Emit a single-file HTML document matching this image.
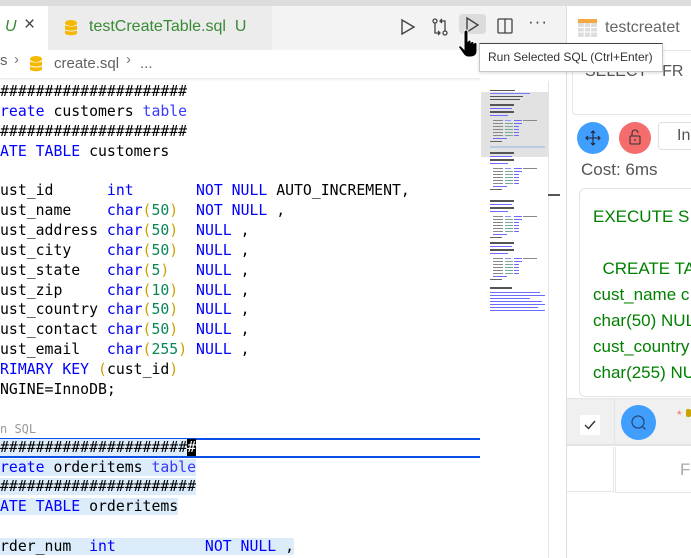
<!DOCTYPE html>
<html><head><meta charset="utf-8"><style>
*{margin:0;padding:0;box-sizing:border-box}
body{width:691px;height:558px;overflow:hidden;background:#fff;position:relative;font-family:"Liberation Sans",sans-serif}
.a{position:absolute}
.code{position:absolute;left:0;font-family:"DejaVu Sans Mono","Liberation Mono",monospace;font-size:14.8px;line-height:19.85px;height:19.85px;white-space:pre;color:#000}
.k{color:#0000ff}.t{color:#3a3aff}.n{color:#098658}.p{color:#c9a300}
.sel{background:#dcecfb}
.g{color:#008000}
</style></head><body>
<div class="a" style="left:0;top:0;width:691px;height:6px;background:#dddddd"></div>
<div class="a" style="left:0;top:6px;width:566px;height:44px;background:#f3f3f3"></div>
<div class="a" style="left:0;top:6px;width:48px;height:44px;background:#fff"></div>
<div class="a" style="left:5px;top:18px;font-size:16px;color:#388a34;font-style:italic">U</div>
<div class="a" style="left:24px;top:14px;font-size:19px;color:#444">×</div>
<div class="a" style="left:48px;top:6px;width:224px;height:44px;background:#ececec"></div>
<svg class="a" style="left:64px;top:19px" width="14" height="18" viewBox="0 0 14 18"><ellipse cx="7" cy="4" rx="6" ry="3" fill="#f5b800"/><path d="M1 6c0 2 12 2 12 0v4c0 2-12 2-12 0z" fill="#f5b800"/><path d="M1 11c0 2 12 2 12 0v3c0 3-12 3-12 0z" fill="#f5b800"/></svg>
<div class="a" style="left:89px;top:18px;font-size:16px;color:#388a34">testCreateTable.sql&nbsp; U</div>
<svg class="a" style="left:398px;top:17px" width="20" height="20" viewBox="0 0 20 20"><path d="M4 3l12 7-12 7z" fill="none" stroke="#424242" stroke-width="1.4"/></svg>
<svg class="a" style="left:430px;top:17px" width="20" height="20" viewBox="0 0 20 20" fill="none" stroke="#424242" stroke-width="1.3"><circle cx="5" cy="4" r="2"/><circle cx="15" cy="16" r="2"/><path d="M5 6v10h5M15 14V4h-5M8 14l2 2-2 2M12 2l-2 2 2 2"/></svg>
<div class="a" style="left:459px;top:14px;width:27px;height:20px;background:#dcdcdc;border-radius:4px"></div>
<svg class="a" style="left:462px;top:15px" width="20" height="20" viewBox="0 0 20 20"><path d="M5 3l11 7-11 7z" fill="none" stroke="#424242" stroke-width="1.4"/></svg>
<svg class="a" style="left:496px;top:17px" width="18" height="18" viewBox="0 0 18 18" fill="none" stroke="#424242" stroke-width="1.3"><rect x="2" y="2" width="14" height="14" rx="1"/><path d="M9 2v14"/></svg>
<div class="a" style="left:528px;top:12px;font-size:17px;color:#424242;letter-spacing:1px">···</div>
<svg class="a" style="left:457px;top:28px" width="26" height="30" viewBox="0 0 26 30"><path d="M9 2c1.5 0 2 1 2 2v9l1-1c1 0 2 0 2 1v1c1-1 3-1 3 1 1-1 3-1 3 1v7c0 4-3 6-6 6h-3c-2 0-3-1-4-2l-5-7c-1-1 0-3 2-2l3 3V4c0-1 1-2 2-2z" fill="#000" stroke="#fff" stroke-width="1"/></svg>
<div class="a" style="left:0;top:52px;font-size:15px;color:#616161">s</div>
<div class="a" style="left:14px;top:51px;font-size:15px;color:#777">›</div>
<svg class="a" style="left:29px;top:55px" width="14" height="18" viewBox="0 0 14 18"><ellipse cx="7" cy="4" rx="6" ry="3" fill="#f5b800"/><path d="M1 6c0 2 12 2 12 0v4c0 2-12 2-12 0z" fill="#f5b800"/><path d="M1 11c0 2 12 2 12 0v3c0 3-12 3-12 0z" fill="#f5b800"/></svg>
<div class="a" style="left:54px;top:55px;font-size:15px;color:#616161">create.sql</div>
<div class="a" style="left:126px;top:51px;font-size:15px;color:#777">›</div>
<div class="a" style="left:140px;top:55px;font-size:15px;color:#616161">...</div>
<div class="a" style="left:0;top:78px;width:480px;height:3px;background:linear-gradient(#e8e8e8,#fff)"></div>
<div class="code" style="top:82px">#####################</div>
<div class="code" style="top:101.85px"><span class="k">reate</span> customers <span class="t">table</span></div>
<div class="code" style="top:121.7px">#####################</div>
<div class="code" style="top:141.55px"><span class="k">ATE TABLE</span> customers</div>
<div class="code" style="top:181.25px">ust_id      <span class="k">int</span>       <span class="k">NOT NULL</span> AUTO_INCREMENT,</div>
<div class="code" style="top:201.1px">ust_name    <span class="k">char</span><span class="p">(</span><span class="n">50</span><span class="p">)</span>  <span class="k">NOT NULL</span> ,</div>
<div class="code" style="top:220.95px">ust_address <span class="k">char</span><span class="p">(</span><span class="n">50</span><span class="p">)</span>  <span class="k">NULL</span> ,</div>
<div class="code" style="top:240.8px">ust_city    <span class="k">char</span><span class="p">(</span><span class="n">50</span><span class="p">)</span>  <span class="k">NULL</span> ,</div>
<div class="code" style="top:260.65px">ust_state   <span class="k">char</span><span class="p">(</span><span class="n">5</span><span class="p">)</span>   <span class="k">NULL</span> ,</div>
<div class="code" style="top:280.5px">ust_zip     <span class="k">char</span><span class="p">(</span><span class="n">10</span><span class="p">)</span>  <span class="k">NULL</span> ,</div>
<div class="code" style="top:300.35px">ust_country <span class="k">char</span><span class="p">(</span><span class="n">50</span><span class="p">)</span>  <span class="k">NULL</span> ,</div>
<div class="code" style="top:320.2px">ust_contact <span class="k">char</span><span class="p">(</span><span class="n">50</span><span class="p">)</span>  <span class="k">NULL</span> ,</div>
<div class="code" style="top:340.05px">ust_email   <span class="k">char</span><span class="p">(</span><span class="n">255</span><span class="p">)</span> <span class="k">NULL</span> ,</div>
<div class="code" style="top:359.9px"><span class="k">RIMARY KEY</span> <span class="p">(</span>cust_id<span class="p">)</span></div>
<div class="code" style="top:379.75px">NGINE=InnoDB;</div>
<div class="a" style="left:0;top:422px;font-family:'DejaVu Sans Mono',monospace;font-size:12px;color:#999">n SQL</div>
<div class="a" style="left:0;top:438px;width:480px;height:2px;background:#0a4fe6"></div>
<div class="a" style="left:0;top:456px;width:480px;height:2px;background:#0a4fe6"></div>
<div class="code" style="top:438px"><span class="sel">#####################</span><span style="background:#000;color:#fff">#</span></div>
<div class="code" style="top:457.5px"><span class="sel"><span class="k">reate</span> orderitems <span class="t">table</span></span></div>
<div class="code" style="top:477.35px"><span class="sel">######################</span></div>
<div class="code" style="top:497.2px"><span class="sel"><span class="k">ATE TABLE</span> orderitems</span></div>
<div class="code" style="top:536.9px"><span class="sel">rder_num  <span class="k">int</span>          <span class="k">NOT NULL</span> ,</span></div>
<!-- minimap -->
<div class="a" style="left:481px;top:92px;width:67px;height:65px;background:#e2e2e2"></div>
<svg class="a" style="left:481px;top:82px" width="67" height="240" viewBox="0 0 67 240">
<defs>
<g id="blk">
<rect x="9" y="0" width="24" height="2" fill="#555"/>
<rect x="9" y="4" width="22" height="1" fill="#6b6bff"/>
<rect x="9" y="7" width="24" height="2" fill="#555"/>
<rect x="9" y="11" width="18" height="1" fill="#6b6bff"/>
<rect x="12" y="16" width="10" height="1" fill="#888"/><rect x="24" y="16" width="6" height="1" fill="#9090ff"/><rect x="33" y="16" width="8" height="1" fill="#6b6bff"/><rect x="42" y="16" width="14" height="1" fill="#888"/>
<rect x="12" y="19" width="10" height="1" fill="#888"/><rect x="24" y="19" width="8" height="1" fill="#7a9"/><rect x="33" y="19" width="8" height="1" fill="#6b6bff"/>
<rect x="12" y="22" width="10" height="1" fill="#888"/><rect x="24" y="22" width="8" height="1" fill="#7a9"/><rect x="33" y="22" width="5" height="1" fill="#6b6bff"/>
<rect x="12" y="25" width="10" height="1" fill="#888"/><rect x="24" y="25" width="8" height="1" fill="#7a9"/><rect x="33" y="25" width="5" height="1" fill="#6b6bff"/>
<rect x="12" y="28" width="10" height="1" fill="#888"/><rect x="24" y="28" width="8" height="1" fill="#7a9"/><rect x="33" y="28" width="5" height="1" fill="#6b6bff"/>
<rect x="12" y="31" width="10" height="1" fill="#888"/><rect x="24" y="31" width="8" height="1" fill="#7a9"/><rect x="33" y="31" width="5" height="1" fill="#6b6bff"/>
<rect x="12" y="34" width="14" height="1" fill="#6b6bff"/>
<rect x="9" y="37" width="12" height="1" fill="#666"/>
</g></defs>
<rect x="9" y="8" width="25" height="1" fill="#555"/><rect x="9" y="11" width="40" height="1" fill="#7a7aff"/><rect x="9" y="14" width="33" height="1" fill="#555"/><rect x="9" y="17" width="30" height="1" fill="#555"/>
<use href="#blk" y="22"/>
<rect x="9" y="64" width="55" height="2" fill="#b8cce4"/>
<use href="#blk" y="70"/>
<use href="#blk" y="118"/>
<use href="#blk" y="160"/>
<rect x="9" y="205" width="22" height="2" fill="#555"/>
<g fill="#6b6bff"><rect x="9" y="210" width="50" height="1"/><rect x="9" y="213" width="55" height="1"/><rect x="9" y="216" width="40" height="1"/><rect x="9" y="219" width="52" height="1"/><rect x="9" y="222" width="55" height="1"/><rect x="9" y="225" width="48" height="1"/><rect x="9" y="228" width="55" height="1"/></g>
</svg>
<div class="a" style="left:548px;top:81px;width:1px;height:477px;background:#e5e5e5"></div>
<div class="a" style="left:548px;top:194px;width:12px;height:2px;background:#555"></div>
<div class="a" style="left:566px;top:6px;width:1px;height:552px;background:#ddd"></div>
<div class="a" style="left:567px;top:6px;width:124px;height:552px;background:#fff"></div>
<svg class="a" style="left:578px;top:19px" width="19" height="18" viewBox="0 0 19 18"><rect x="0" y="0" width="19" height="4" fill="#f5a742"/><rect x="0" y="4" width="19" height="14" fill="#ddd"/><path d="M0 8.5h19M0 13h19M6.3 4v14M12.6 4v14" stroke="#fff" stroke-width="1"/></svg>
<div class="a" style="left:605px;top:19px;font-size:16px;color:#666">testcreatet</div>
<div class="a" style="left:572px;top:50px;width:130px;height:65px;border:1px solid #e6e6e6;border-radius:4px"></div>
<div class="a" style="left:585px;top:63px;font-size:16px;color:#555">SELECT * FR</div>
<div class="a" style="left:577px;top:122px;width:32px;height:32px;border-radius:50%;background:#409eff"></div>
<svg class="a" style="left:585px;top:130px" width="16" height="16" viewBox="0 0 16 16" fill="none" stroke="#223" stroke-width="1.1"><path d="M8 1v14M1 8h14M6 3l2-2 2 2M6 13l2 2 2-2M3 6l-2 2 2 2M13 6l2 2-2 2"/></svg>
<div class="a" style="left:619px;top:122px;width:32px;height:32px;border-radius:50%;background:#f56c6c"></div>
<svg class="a" style="left:627px;top:129px" width="16" height="17" viewBox="0 0 16 17" fill="none" stroke="#333" stroke-width="1.1"><rect x="3" y="7" width="10" height="8" rx="1"/><path d="M5 7V4a3 3 0 0 1 6 0"/><path d="M8 10v2"/></svg>
<div class="a" style="left:658px;top:122px;width:40px;height:28px;border:1px solid #dcdfe6;border-radius:4px"></div>
<div class="a" style="left:677px;top:127px;font-size:16px;color:#555">Inp</div>
<div class="a" style="left:581px;top:160px;font-size:17px;color:#555">Cost: 6ms</div>
<div class="a" style="left:579px;top:188px;width:130px;height:209px;border:1px solid #e2e2e2;border-radius:6px"></div>
<div class="a g" style="left:593px;top:204px;font-size:17px;line-height:26px;white-space:pre">EXECUTE S

  CREATE TA
cust_name c
char(50) NUL
cust_country
char(255) NU</div>
<div class="a" style="left:567px;top:398px;width:124px;height:48px;background:#f0f0f0;border-top:1px solid #e4e4e4;border-bottom:2px solid #e4e4e4"></div>
<div class="a" style="left:614px;top:398px;width:1px;height:48px;background:#e4e4e4"></div>
<div class="a" style="left:580px;top:415px;width:20px;height:20px;background:#fff;border-radius:2px"></div>
<svg class="a" style="left:583px;top:419px" width="14" height="12" viewBox="0 0 14 12"><path d="M2 6l3.5 3.5L12 2" fill="none" stroke="#333" stroke-width="1.4"/></svg>
<div class="a" style="left:621px;top:405px;width:35px;height:35px;border-radius:50%;background:#409eff"></div>
<svg class="a" style="left:629px;top:413px" width="20" height="20" viewBox="0 0 20 20" fill="none" stroke="#2a4a7a" stroke-width="1.3"><circle cx="9" cy="9" r="6"/><path d="M13.5 13.5l3 3"/></svg>
<div class="a" style="left:677px;top:408px;font-size:12px;color:#f56c6c">*</div>
<div class="a" style="left:686px;top:409px;width:5px;height:8px;background:#c9a300;border-radius:2px"></div>
<div class="a" style="left:567px;top:447px;width:47px;height:45px;border-right:1px solid #e6e6e6;border-bottom:1px solid #e6e6e6"></div>
<div class="a" style="left:615px;top:447px;width:1px;height:46px;background:#e6e6e6"></div>
<div class="a" style="left:615px;top:492px;width:76px;height:1px;background:#e6e6e6"></div>
<div class="a" style="left:680px;top:460px;font-size:17px;color:#aaa">Fi</div>
<div class="a" style="left:479px;top:43px;width:184px;height:29px;background:#fff;border:1px solid #c8c8c8;border-top:1px solid #444;box-shadow:0 1px 3px rgba(0,0,0,.15)"></div>
<div class="a" style="left:488px;top:50px;font-size:12px;color:#333;white-space:nowrap">Run Selected SQL (Ctrl+Enter)</div>
</body></html>
